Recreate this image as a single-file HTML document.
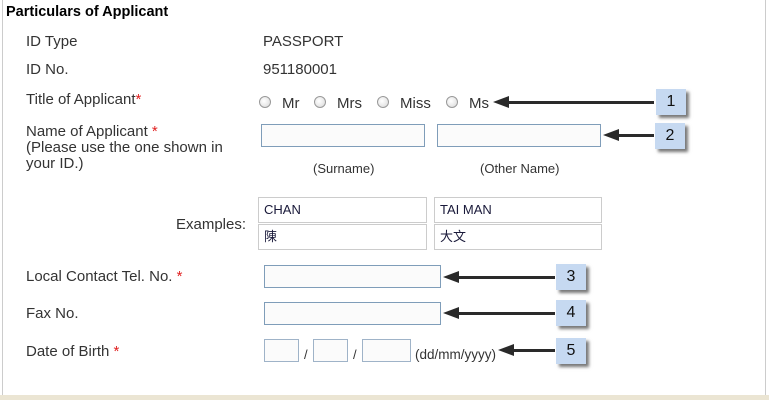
<!DOCTYPE html>
<html><head><meta charset="utf-8"><style>
body{margin:0;width:769px;height:400px;position:relative;background:#fff;font-family:"Liberation Sans",Arial,"Noto Sans CJK TC",sans-serif;color:#333;font-size:15px;overflow:hidden}
.a{position:absolute;white-space:nowrap;line-height:16px;transform:translateY(1px)}
.s{color:#e02020}
.in{position:absolute;box-sizing:border-box;border:1px solid #7f9db9;background:#fbfbfb;height:23px}
.ex{position:absolute;box-sizing:border-box;border:1px solid #ccc;height:26px;padding:4px 5px;font-size:13px;color:#1a1a3a;line-height:16px}
.rb{position:absolute;width:10px;height:10px;border-radius:50%;border:1px solid #999;background:radial-gradient(circle at 40% 40%,#fff,#d8d8d8)}
.bx{position:absolute;width:30px;height:26px;background:#c6d9f1;box-shadow:3px 3px 3px #777;text-align:center;font-size:16px;line-height:26px;color:#111}
.ln{position:absolute;height:3px;background:#2a2a2a}
.hd{position:absolute;width:0;height:0;border-top:6px solid transparent;border-bottom:6px solid transparent;border-right:16px solid #2a2a2a}
</style></head><body>
<div style="position:absolute;left:2px;top:0;width:1px;height:400px;background:#ccc"></div>
<div style="position:absolute;left:765px;top:0;width:1px;height:400px;background:#ccc"></div>
<div style="position:absolute;left:0;top:395px;width:769px;height:5px;background:#ebe5d3"></div>
<div class="a" style="left:6px;top:3px;font-weight:bold;color:#000;font-size:14.5px">Particulars of Applicant</div>
<div class="a" style="left:26px;top:33px">ID Type</div>
<div class="a" style="left:263px;top:33px">PASSPORT</div>
<div class="a" style="left:26px;top:61px">ID No.</div>
<div class="a" style="left:263px;top:61px">951180001</div>
<div class="a" style="left:26px;top:91px">Title of Applicant<span class="s">*</span></div>
<div class="rb" style="left:259px;top:96px"></div><div class="a" style="left:282px;top:95px">Mr</div>
<div class="rb" style="left:314px;top:96px"></div><div class="a" style="left:337px;top:95px">Mrs</div>
<div class="rb" style="left:377px;top:96px"></div><div class="a" style="left:400px;top:95px">Miss</div>
<div class="rb" style="left:446px;top:96px"></div><div class="a" style="left:469px;top:95px">Ms</div>
<div class="hd" style="left:493px;top:96px"></div><div class="ln" style="left:508px;top:101px;width:146px"></div>
<div class="bx" style="left:656px;top:89px">1</div>
<div class="a" style="left:26px;top:123px;line-height:16px">Name of Applicant <span class="s">*</span><br>(Please use the one shown in<br>your ID.)</div>
<div class="in" style="left:261px;top:124px;width:164px"></div>
<div class="in" style="left:437px;top:124px;width:164px"></div>
<div class="hd" style="left:603px;top:129px"></div><div class="ln" style="left:618px;top:134px;width:36px"></div>
<div class="bx" style="left:655px;top:123px">2</div>
<div class="a" style="left:313px;top:160px;font-size:13px">(Surname)</div>
<div class="a" style="left:480px;top:160px;font-size:13px">(Other Name)</div>
<div class="a" style="left:176px;top:216px">Examples:</div>
<div class="ex" style="left:258px;top:197px;width:169px">CHAN</div>
<div class="ex" style="left:258px;top:224px;width:169px">陳</div>
<div class="ex" style="left:434px;top:197px;width:168px">TAI MAN</div>
<div class="ex" style="left:434px;top:224px;width:168px">大文</div>
<div class="a" style="left:26px;top:268px">Local Contact Tel. No. <span class="s">*</span></div>
<div class="in" style="left:264px;top:265px;width:177px"></div>
<div class="hd" style="left:443px;top:271px"></div><div class="ln" style="left:458px;top:276px;width:97px"></div>
<div class="bx" style="left:556px;top:264px">3</div>
<div class="a" style="left:26px;top:305px">Fax No.</div>
<div class="in" style="left:264px;top:302px;width:177px"></div>
<div class="hd" style="left:443px;top:307px"></div><div class="ln" style="left:458px;top:312px;width:97px"></div>
<div class="bx" style="left:556px;top:300px">4</div>
<div class="a" style="left:26px;top:343px">Date of Birth <span class="s">*</span></div>
<div class="in" style="left:264px;top:339px;width:35px;border-color:#9fb3c8"></div>
<div class="a" style="left:304px;top:346px;font-size:13px">/</div>
<div class="in" style="left:313px;top:339px;width:35px;border-color:#9fb3c8"></div>
<div class="a" style="left:353px;top:346px;font-size:13px">/</div>
<div class="in" style="left:362px;top:339px;width:49px;border-color:#9fb3c8"></div>
<div class="a" style="left:415px;top:346px;font-size:13.5px">(dd/mm/yyyy)</div>
<div class="hd" style="left:498px;top:344px"></div><div class="ln" style="left:513px;top:349px;width:42px"></div>
<div class="bx" style="left:556px;top:338px">5</div>
</body></html>
